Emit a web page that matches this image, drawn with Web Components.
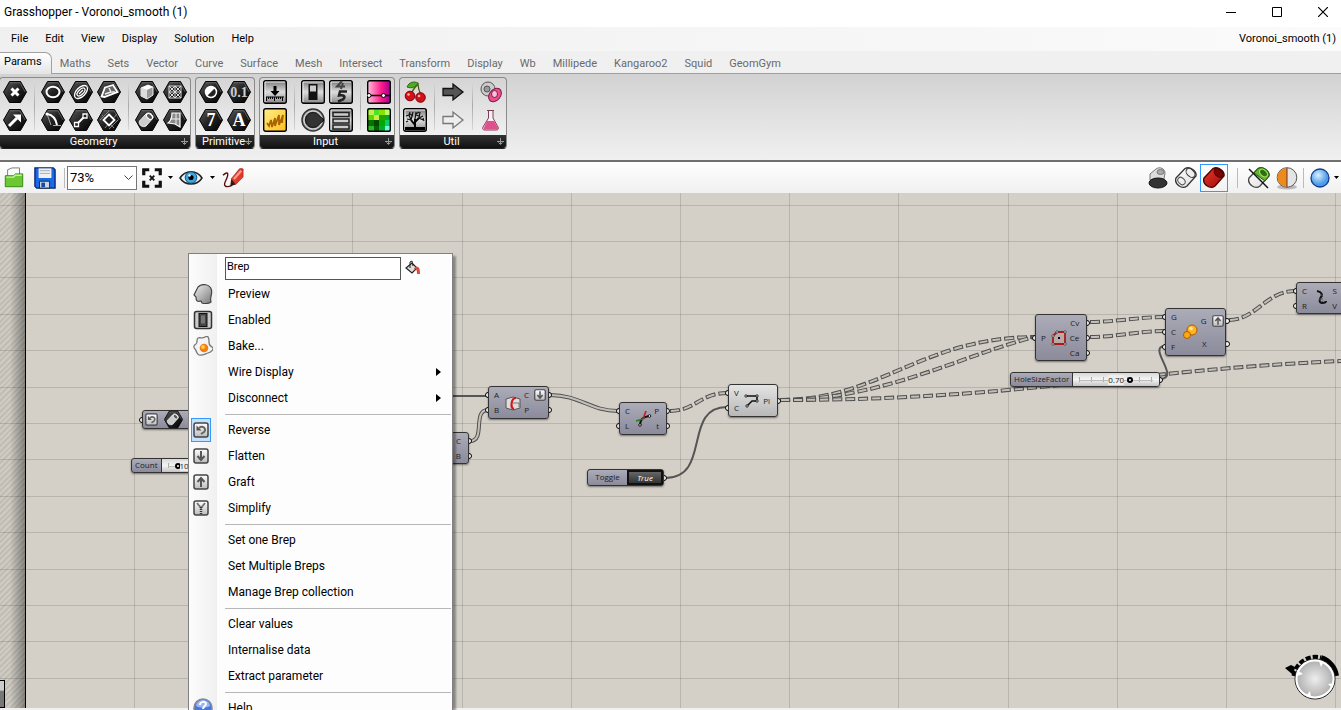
<!DOCTYPE html>
<html lang="en">
<head>
<meta charset="utf-8">
<title>Grasshopper - Voronoi_smooth (1)</title>
<style>
    html, body { height: 100%; }
    body { margin: 0; overflow: hidden; background: #fff; color: #000; font: 12px/16px Roboto, "Noto Sans", sans-serif; }
</style>
</head>
<body>
<gh-app></gh-app>
<script>
// ---------- icons ----------
const HEX = '<defs><linearGradient id="h" x2="1" y2="1"><stop stop-color="#5a5a5a"/><stop offset=".5" stop-color="#222"/><stop offset="1" stop-color="#000"/></linearGradient></defs><path d="M6.5 1.5h11l6 10.5-6 10.5h-11L.5 12z" fill="url(#h)" stroke="#000"/><path d="M7 2.8h10l5.200 9.200" fill="none" stroke="#777" stroke-width=".7"/>';
const TILE = '<defs><linearGradient id="t" y2="1" x2="0"><stop stop-color="#777"/><stop offset=".5" stop-color="#ddd"/><stop offset="1" stop-color="#888"/></linearGradient></defs><rect x=".7" y=".7" width="22.600" height="22.600" rx="2" fill="url(#t)" stroke="#000" stroke-width="1.400"/><path d="M2 22V2h20" fill="none" stroke="#eee"/>';
const SMALL = '<defs><linearGradient id="s" y2="1" x2="0"><stop stop-color="#fff"/><stop offset="1" stop-color="#bbb"/></linearGradient></defs><rect x="1" y="1" width="14" height="14" rx="2" fill="url(#s)" stroke="#444" stroke-width="1.500"/>';
const CYL = (a, b, c, line) => `<defs><linearGradient id="c" x1="0" y1="0" x2="1" y2="1"><stop stop-color="${a}"/><stop offset="1" stop-color="${b}"/></linearGradient></defs><path d="M2 12 11 2.500C16 0 23 5 22 10L13 20C8 24 0 18 2 12z" fill="url(#c)" stroke="${line}" stroke-width="1.300"/><ellipse cx="16.500" cy="7" rx="3.500" ry="5.200" transform="rotate(-45 16.500 7)" fill="${c}" stroke="${line}"/>`;

const ICONS = {
    // geometry
    point: [24, HEX + '<path d="m8.500 8.500 7 7m0-7-7 7" stroke="#fff" stroke-width="3"/>'],
    vector: [24, HEX + '<path d="m6 18 8-8" stroke="#fff" stroke-width="3"/><path d="M10 6.500h8v8z" fill="#fff"/>'],
    circle: [24, HEX + '<ellipse cx="12" cy="12" rx="6.500" ry="5.300" fill="none" stroke="#fff" stroke-width="2"/>'],
    arc: [24, HEX + '<path d="M6 6c6 1 9 5 10 11" fill="none" stroke="#fff" stroke-width="2"/><path d="M6 6l4 11m2 .5h8" stroke="#aaa" fill="none"/><circle cx="6" cy="6" r="1.500" fill="#fff"/>'],
    curve: [24, HEX + '<g fill="none" stroke="#fff" stroke-width="1.300"><ellipse cx="12" cy="12" rx="8" ry="4.500" transform="rotate(-45 12 12)"/><ellipse cx="12" cy="12" rx="5" ry="2.500" transform="rotate(-45 12 12)"/><path d="m10 14 4-4"/></g>'],
    line: [24, HEX + '<path d="m7 17 9-9" stroke="#fff" stroke-width="2"/><path d="M5.500 14.500h4v4h-4zM14 6h4v4h-4z" fill="#222" stroke="#fff" stroke-width="1.300"/>'],
    plane: [24, HEX + '<path d="m8 7.500 8-2.500 4.500 7-13 5-3-.5z" fill="#666" stroke="#fff" stroke-width="1.800"/><path d="m8 14 6-2-2-4m3 4 3 0" fill="none" stroke="#eee" stroke-width="1.500"/>'],
    rect: [24, HEX + '<path d="m3 12 9-9m9 9-9 9M5 7l12 13M8 20 20 6" stroke="#888"/><path d="m12 6.500 5.500 5.500-5.500 5.500L6.500 12z" fill="#222" stroke="#fff" stroke-width="1.800"/>'],
    box: [24, HEX + '<path d="m6 8 7-3 5 2v8l-6 4-6-3z" fill="#999" stroke="#eee"/><path d="m6 8 6 2v9l-6-3z" fill="#ddd"/><path d="m6 8 7-3 5 2-6 3z" fill="#fff"/>'],
    brep: [24, HEX + '<path d="M4.500 13 11 6c3-3 8 1 7 4l-7 8c-3 2-8-1-6.500-5z" fill="#ccc" stroke="#eee"/><ellipse cx="14.500" cy="8.500" rx="2.200" ry="3.500" transform="rotate(-45 14.500 8.500)" fill="#555" stroke="#fff"/>'],
    mesh: [24, HEX + '<path d="M6 6h12v12H6zM6 12h12M12 6v12M6 6l12 12m0-12L6 18M12 6l6 6-6 6-6-6z" fill="none" stroke="#ddd"/>'],
    surface: [24, HEX + '<path d="M9 5h8v14l-5-3-7-1c3-2 4-6 4-10z" fill="#888" stroke="#fff" stroke-width="1.200"/><path d="M13 5v11M7 11h10" stroke="#eee"/>'],
    // primitive
    bool: [24, HEX + '<circle cx="12" cy="12" r="5.500" fill="#fff"/><path d="M8 16 16 8a5.500 5.500 0 0 1-8 8z" fill="#222"/><circle cx="12" cy="12" r="5.500" fill="none" stroke="#fff" stroke-width="1.500"/>'],
    int: [24, HEX + '<text x="12" y="18" text-anchor="middle" font-family="Liberation Serif" font-weight="bold" font-size="18" fill="#fff">7</text>'],
    number: [24, HEX + '<text x="12" y="17" text-anchor="middle" font-family="Liberation Serif" font-weight="bold" font-size="14" fill="#ccc">0.1</text>'],
    text: [24, HEX + '<text x="12" y="18" text-anchor="middle" font-family="Liberation Serif" font-weight="bold" font-size="18" fill="#fff">A</text>'],
    // input
    slider: [24, TILE + '<path d="M12 6v7" stroke="#000" stroke-width="3"/><path d="M7.500 11h9L12 16z"/><path d="M3.500 21v-4m2 2v-2m2 2v-2m2 2v-2m2 4v-4m2 2v-2m2 2v-2m2 2v-2m2 4v-4M3 17h18" stroke="#000"/>'],
    panel: [24, '<defs><linearGradient id="y" x2="1" y2="1"><stop stop-color="#fff08a"/><stop offset="1" stop-color="#ffbe1a"/></linearGradient></defs><rect x=".7" y=".7" width="22.600" height="22.600" rx="2" fill="url(#y)" stroke="#000" stroke-width="1.400"/><path d="m4 15 2 3 2-6 1 7 3-9 0 8 4-11v10l4-10-1 8" fill="none" stroke="#a86400" stroke-width="1.800"/>'],
    toggle: [24, TILE + '<path d="M7.500 4h9v16h-9z" fill="#111"/><path d="M9 5.500h6v6H9z" fill="#ccc"/>'],
    knob: [24, '<circle cx="12" cy="12" r="11" fill="#aaa" stroke="#333" stroke-width="1.500"/><circle cx="12" cy="12" r="9" fill="#777" stroke="#ddd"/><path d="M18 7.500 23 12l-5 4.500a7.500 7.500 0 1 1 0-9z" fill="#333" stroke="#111"/>'],
    scroller: [24, TILE + '<path d="M13 1 8 6.500h8M14 3l-2 6" fill="none" stroke="#444" stroke-width="2"/><path d="M18 11.500h-7l-1 4c5-1 7 1 4 4l-5 2" fill="none" stroke="#222" stroke-width="2.500"/>'],
    list: [24, TILE + '<g fill="#ccc" stroke="#222" stroke-width="1.500"><path d="M4 4.500h16v4H4zM4 11h16v4H4zM4 17h16v4H4z"/></g>'],
    gradient: [24, '<defs><linearGradient id="p" x2="1" y2="0"><stop stop-color="#ffc0dc"/><stop offset=".6" stop-color="#ff1a8c"/><stop offset="1" stop-color="#a00090"/></linearGradient></defs><rect x=".7" y=".7" width="22.600" height="22.600" rx="2" fill="url(#p)" stroke="#000" stroke-width="1.400"/><path d="M0 15.500h24" stroke="#000" stroke-width="1.300"/><circle cx="2" cy="15.500" r="2" fill="#fff" stroke="#000"/><circle cx="16.500" cy="15.500" r="2" fill="#fff" stroke="#000"/>'],
    image: [24, '<rect width="24" height="24" rx="2" fill="#0a3"/><g><path d="M1 1h6v6H1z" fill="#bdf24a"/><path d="M7 1h5v6H7z" fill="#4ee02c"/><path d="M12 1h6v6h-6z" fill="#84e600"/><path d="M18 1h5v6h-5z" fill="#b8ff70"/><path d="M1 7h6v5H1z" fill="#5bd800"/><path d="M7 7h5v5H7z" fill="#c8f040"/><path d="M12 7h6v5h-6z" fill="#2ba000"/><path d="M1 12h6v6H1z" fill="#0c7000"/><path d="M7 12h5v6H7z" fill="#034a00"/><path d="M12 12h6v6h-6z" fill="#0a0"/><path d="M18 12h5v6h-5z" fill="#1c6"/><path d="M1 18h6v5H1z" fill="#28b828"/><path d="M7 18h5v5H7z" fill="#066000"/><path d="M18 18h5v5h-5z" fill="#6fd"/></g><rect x=".7" y=".7" width="22.600" height="22.600" rx="2" fill="none" stroke="#000" stroke-width="1.400"/>'],
    // util
    cherry: [24, '<path d="M8 14C10 9 12 7 15 4c0 4 1 7 3 11" fill="none" stroke="#4a5a10" stroke-width="1.300"/><path d="M4 7c2-5 7-6 11-4-2 4-6 6-11 4z" fill="#4fae1e" stroke="#2d6a10"/><circle cx="7" cy="16" r="4.800" fill="#d4101a" stroke="#7c0008"/><circle cx="17.500" cy="17.500" r="4.800" fill="#d4101a" stroke="#7c0008"/><circle cx="5.500" cy="14.500" r="1.300" fill="#ffb0a8"/><circle cx="16" cy="16" r="1.300" fill="#ffb0a8"/>'],
    tree: [24, TILE + '<path d="M12 21V11m0 6-4-5m4 2 4-4" stroke="#000" stroke-width="2" fill="none"/><path d="M8 12 4 11m4 1L6 7m2 5 2-8m2 7 1-7m3 6 1-6m-1 6 4-2m-4 2 4 2M5 13l-2 1m17-4 1 3M6 7 3 8m3-1 1-3m6 2 3-2m-6 4L7 6m9 2-3-1" stroke="#111" stroke-width="1.200" fill="none"/><path d="M2 19h20v3H2z"/>'],
    arrowDark: [24, '<path d="M2 8.500h10V4l10 8-10 8v-4.500H2z" fill="#555" stroke="#111" stroke-width="1.300"/>'],
    arrowLight: [24, '<path d="M2 8.500h10V4l10 8-10 8v-4.500H2z" fill="#eee" stroke="#777" stroke-width="1.300"/>'],
    cluster: [24, '<circle cx="9" cy="9" r="7" fill="#ccc" stroke="#555"/><circle cx="8" cy="9" r="3" fill="#999" stroke="#555"/><ellipse cx="16" cy="15" rx="5.500" ry="7.500" transform="rotate(40 16 15)" fill="#e8508c" stroke="#801848"/><ellipse cx="15.500" cy="14" rx="3" ry="3.500" fill="#ffc0dc" stroke="#801848"/>'],
    flask: [24, '<path d="M8 2.500h7M9.500 3v7L4 19c-1 2 0 3 2 3h11c2 0 3-1 2-3l-5-9V3" fill="#fbeef4" stroke="#7a4058"/><path d="M8 13h7l4 7c0 1-1 1.500-2 1.500H6c-1 0-2-.5-1-2z" fill="#e0508c"/>'],
    // toolbar
    open: [24, '<path d="M5 10V3l5-2h8v9" fill="#fafafa" stroke="#777"/><path d="M2.500 9.500h9l2-2h8v14h-19z" fill="#6cc832" stroke="#2e8410"/><path d="M3.500 11h8l2-2h7" fill="none" stroke="#c8f09a" stroke-width="1.500"/>'],
    save: [24, '<path d="M1 1h20l2 2v20H3l-2-2z" fill="#1a6ae8" stroke="#06206a" stroke-width="1.400"/><path d="M5 1.500h14V12H5z" fill="#f0f0f0"/><path d="M6.500 4h11m-11 3h11" stroke="#aaa"/><path d="M6 15.500h11V23H6z" fill="#ccd4e0" stroke="#123"/><path d="M8 17h4v5H8z" fill="#1848a0"/>'],
    zoomExt: [24, '<path d="M3 9V3h6M15 3h6v6M21 15v6h-6M9 21H3v-6" fill="none" stroke="#111" stroke-width="3.500"/><path d="m9.500 9.500 5 5m0-5-5 5" stroke="#111" stroke-width="2"/>'],
    eye: [24, '<path d="M1 12C6 3.500 18 3.500 23 12c-5 8-17 8-22 0z" fill="#e8f6ff" stroke="#222" stroke-width="1.500"/><circle cx="12" cy="11.500" r="5.800" fill="#3ca8e0" stroke="#124a78"/><circle cx="12" cy="11.500" r="2.600"/><circle cx="10.500" cy="9.500" r="1.200" fill="#fff"/>'],
    pencil: [24, '<path d="M1 9c7-6 6 0 3 6s0 8 7 5" fill="none" stroke="#5a1010" stroke-width="1.500"/><path d="m10 13 9-11c3-1 5 0 4 2v7l-8 8z" fill="#e03a2a" stroke="#a02018" stroke-width=".7"/><path d="m10 13 5 6-6 2z" fill="#3a1410"/><path d="m13 13 8-9" stroke="#ff9a8a" stroke-width="2.500"/>'],
    shadeOff: [24, '<path d="M4 14V8l6-5c4-3 9 0 9 4l-1 6z" fill="#ddd" stroke="#777"/><ellipse cx="14.500" cy="6" rx="3.500" ry="2.500" fill="#aaa" stroke="#777"/><ellipse cx="12" cy="17" rx="9" ry="5" fill="#333" stroke="#111"/>'],
    shadeWire: [24, CYL('#fff', '#ddd', '#eee', '#333') + '<ellipse cx="7.500" cy="15" rx="3" ry="4.200" transform="rotate(-45 7.500 15)" fill="none" stroke="#555"/>'],
    shadeFull: [24, CYL('#e83a2c', '#a00808', '#7a0404', '#4a0000')],
    shadeSel: [24, CYL('#fff', '#ddd', '#eee', '#444') + '<path d="M7 7l4-4.500C16 0 23 5 22 10l-4 5z" fill="#64b428" stroke="#245c0c"/><ellipse cx="16.500" cy="7" rx="3" ry="4.500" transform="rotate(-45 16.500 7)" fill="#2e7010" stroke="#a8e070"/><path d="m2 3 19 19" stroke="#111" stroke-width="1.500"/>'],
    ballHalf: [24, '<ellipse cx="12" cy="21" rx="10" ry="2.500" fill="#bbb"/><circle cx="12" cy="11.500" r="9.800" fill="#e4e4e4" stroke="#555"/><path d="M12 2a9.500 9.500 0 0 0 0 19z" fill="#ec8a1c"/><path d="M12 2v19" stroke="#633"/>'],
    ball: [24, '<defs><radialGradient id="b" cx=".4" cy=".35"><stop stop-color="#d8f2ff"/><stop offset="1" stop-color="#4e9ce8"/></radialGradient></defs><circle cx="12" cy="12" r="9" fill="url(#b)" stroke="#153a90" stroke-width="1.300"/>'],
    // menu
    head: [20, '<defs><linearGradient id="g" x2="1" y2="1"><stop stop-color="#f2f2f2"/><stop offset="1" stop-color="#777"/></linearGradient></defs><path d="M5 3c4-4 12-3 13.500 3 1 5-2 7-.5 12-3 2-6 2-9 1l-1-2c-4 1-5 0-5-4L1 11z" fill="url(#g)" stroke="#444" stroke-width="1.200"/>'],
    enabled: [20, '<rect x="1.500" y="1.500" width="17" height="17" rx="2" fill="#ccc" stroke="#333" stroke-width="1.500"/><rect x="6" y="3.500" width="8" height="13" fill="#444" stroke="#111"/><path d="M8 5.500h4v8H8z" fill="#777"/>'],
    bake: [20, '<path d="M5 2c3-1 4 1 7-1s4 1 4 4 0 4 3 6-1 5-4 6-6 3-9 2-2-4-4-6-1-4 1-5 0-5 2-6z" fill="#f4f4f4" stroke="#777" stroke-width="1.300"/><circle cx="11" cy="12" r="4.300" fill="#f57c10"/><circle cx="10" cy="11" r="2" fill="#ffc84a"/>'],
    bucket: [16, '<path d="m1 8 6-5 5 5-5 5z" fill="#ddd" stroke="#222" stroke-width="1.200"/><path d="M5 8V2l2-1 1 5" fill="none" stroke="#222"/><path d="M10 7c4-1 5 1 5 7h-3c0-3 0-5-3-5z" fill="#e04a38"/>'],
    reverse: [16, SMALL + '<path d="M3.500 3.500v5h5z" fill="#555"/><path d="M6 6c4-3 8 1 5 4l-3 2" fill="none" stroke="#666" stroke-width="2"/>'],
    flatten: [16, SMALL + '<path d="M8 3v8M4.500 8 8 12l3.500-4" fill="none" stroke="#555" stroke-width="2"/>'],
    graft: [16, SMALL + '<path d="M8 13V5M4.500 8 8 4l3.500 4" fill="none" stroke="#555" stroke-width="2"/>'],
    simplify: [16, SMALL + '<path d="m4 3 4 5 4-5" fill="none" stroke="#777" stroke-width="2"/><path d="M8 7v7" stroke="#333" stroke-width="2.500" stroke-dasharray="1 1"/>'],
    help: [20, '<circle cx="10" cy="10" r="9" fill="#4a78d8" stroke="#889" stroke-width="1.500"/><path d="M3 8a7 6 0 0 1 14 0c-4 2-10 2-14 0z" fill="#9ab8f4"/><path d="M7 7c0-4 6-4 6-1 0 2-3 2-3 5m0 2v2" fill="none" stroke="#fff" stroke-width="2"/>'],
    // components
    contour: [18, '<path d="m2 5 7-2 7 2v9l-7 2-7-2z" fill="#ddd" stroke="#555"/><path d="M12 4c-5 0-6 10-2 11" fill="none" stroke="#d01818" stroke-width="2.200"/><path d="M9 9h6v4" stroke="#777" fill="none"/>'],
    eval: [18, '<path d="M6 16C6 9 9 7 15 6" fill="none" stroke="#111" stroke-width="2"/><path d="m9 9 3-8" stroke="#c82020" stroke-width="1.700"/><path d="m9 9-7 2" stroke="#208020" stroke-width="1.700"/><circle cx="6" cy="15" r="1.300" fill="#fff" stroke="#111"/><circle cx="15.500" cy="6" r="1.300" fill="#fff" stroke="#111"/>'],
    polyline: [18, '<path d="M3 4h11v5H9l-5 5" fill="none" stroke="#111" stroke-width="1.500"/><g fill="#fff" stroke="#111" stroke-width=".8"><path d="M2 3h2v2H2zM13 3h2v2h-2zM13 8h2v2h-2zM3 13h2v2H3z"/></g>'],
    cell: [18, '<path d="m3 7 4-4h8v12H3z" fill="#b8a8a8" stroke="#b01818" stroke-width="1.800"/><g fill="#fff" stroke="#444" stroke-width=".8"><path d="M2 6h2v2H2zM6 2h2v2H6zM14 2h2v2h-2zM14 14h2v2h-2zM2 14h2v2H2z"/></g><path d="M8 8h2v2H8z"/>'],
    scale: [18, '<circle cx="11" cy="7" r="5" fill="#ffb428" stroke="#a85c00"/><circle cx="6" cy="12" r="3.500" fill="#ffa810" stroke="#a85c00"/><circle cx="10" cy="5.500" r="1.800" fill="#ffe6a0"/>'],
    spring: [18, '<path d="M5 2c5 1 6 4 4 6s-2 6 1 6 4-1 4-2" fill="none" stroke="#111" stroke-width="2"/><path d="m8 5 3 2m-4 3h4m-2 3 2-1" stroke="#555"/>'],
};

class GhIcon extends HTMLElement {
    constructor(){
        super();
        this.attachShadow({ mode: 'open' });
    }
    connectedCallback(){
        const [box, art] = ICONS[this.getAttribute('name')];
        const size = this.getAttribute('size') ?? box;
        this.shadowRoot.innerHTML = `
        <style>
            :host { display: block; flex: none; width: ${size}px; height: ${size}px; }
            svg { display: block; width: 100%; height: 100%; }
        </style>
        <svg viewBox="0 0 ${box} ${box}" aria-hidden="true">${art}</svg>`;
    }
}
customElements.define('gh-icon', GhIcon);

// ---------- window bars ----------
class GhTitlebar extends HTMLElement {
    constructor(){
        super();
        this.attachShadow({ mode: 'open' }).innerHTML = `
        <style>
            :host { display: flex; justify-content: space-between; height: 27px; background: #fff; }
            span { padding: 4px; }
            div { display: flex; gap: 10px; }
            button { width: 36px; height: 24px; padding: 0; border: 0; background: none; }
            svg { display: block; margin: auto; }
        </style>
        <span><slot></slot></span>
        <div>
            <button aria-label="Minimize"><svg width="10" height="10"><path d="M0 5.500h10" stroke="#000"/></svg></button>
            <button aria-label="Maximize"><svg width="10" height="10"><path d="M.5.5h9v9h-9z" fill="none" stroke="#000"/></svg></button>
            <button aria-label="Close"><svg width="10" height="10"><path d="m0 0 10 10M10 0 0 10" stroke="#000" stroke-width="1.200"/></svg></button>
        </div>`;
    }
}
customElements.define('gh-titlebar', GhTitlebar);

class GhMenubar extends HTMLElement {
    constructor(){
        super();
        this.attachShadow({ mode: 'open' });
    }
    connectedCallback(){
        const items = this.getAttribute('items').split(',');
        this.shadowRoot.innerHTML = `
        <style>
            :host { display: flex; align-items: center; justify-content: space-between; height: 24px; padding: 0 5px 0 11px;
                background: linear-gradient(90deg, #f0f0f0, #f8f8f8 80%, #fbfbfb); font-size: 11px; }
            nav { display: flex; gap: 17px; }
            button { padding: 0; border: 0; background: none; font: inherit; color: inherit; }
        </style>
        <nav>${items.map(i => `<button>${i}</button>`).join('')}</nav>
        <slot></slot>`;
    }
}
customElements.define('gh-menubar', GhMenubar);

class GhTabs extends HTMLElement {
    constructor(){
        super();
        this.attachShadow({ mode: 'open' });
    }
    connectedCallback(){
        const tabs = this.getAttribute('items').split(',');
        this.shadowRoot.innerHTML = `
        <style>
            :host { display: flex; align-items: end; gap: 17px; height: 23px; box-sizing: border-box; background: #f0f0f0; border-bottom: 1px solid #a0a0a0; }
            button { height: 18px; padding: 0; border: 0; background: none; font: 11px/16px Roboto, sans-serif; color: #6a6a6a; }
            .on { box-sizing: border-box; height: 22px; margin: 0 -9px -1px -1px; padding: 0 9px 4px 4px; border: 1px solid #a0a0a0; border-bottom: 0;
                border-radius: 0 7px 0 0; background: linear-gradient(#fff, #e4e4e4); color: #000; }
        </style>
        ${tabs.map((t, i) => `<button role="tab"${i ? '' : ' class="on" aria-selected="true"'}>${t}</button>`).join('')}`;
    }
}
customElements.define('gh-tabs', GhTabs);

// groups are separated by "|", each group lists its icons row by row
class GhPanel extends HTMLElement {
    constructor(){
        super();
        this.attachShadow({ mode: 'open' });
    }
    connectedCallback(){
        const groups = this.getAttribute('icons').split('|').map(g => g.split(' '));
        this.shadowRoot.innerHTML = `
        <style>
            :host { display: block; border: 1px solid #8a8a8a; border-bottom-color: #222; border-radius: 4px; overflow: hidden; background: linear-gradient(#d4d4d4, #f0f0f0 55px); }
            .groups { display: flex; padding: 0 1px 1px; }
            .group { display: grid; grid-template-rows: 28px 28px; }
            button { display: grid; place-items: center; width: 28px; height: 28px; padding: 0; border: 0; background: none; }
            hr { width: 1px; margin: 4px 4px 4px 5px; border: 0; background: linear-gradient(#d8d8d8, #aaa, #d8d8d8); }
            footer { display: flex; align-items: center; height: 13px; padding: 0 2px 0 6px; background: linear-gradient(#333, #111); color: #fff; font: 11px/13px Roboto, sans-serif; }
            span { flex: 1; text-align: center; }
        </style>
        <div class="groups">
            ${groups.map(g => `<div class="group" style="grid-template-columns: repeat(${g.length / 2}, 28px)">
                ${g.map(n => `<button aria-label="${n}"><gh-icon name="${n}"></gh-icon></button>`).join('')}
            </div>`).join('<hr>')}
        </div>
        <footer><span><slot></slot></span><svg width="7" height="7"><path d="M3.500 0v6M0 3.500h7M1.500 4.500l2 2 2-2" fill="none" stroke="#999"/></svg></footer>`;
    }
}
customElements.define('gh-panel', GhPanel);

class GhRibbon extends HTMLElement {
    constructor(){
        super();
        this.attachShadow({ mode: 'open' }).innerHTML = `
        <style>
            :host { display: flex; align-items: start; gap: 4px; height: 88px; box-sizing: border-box; padding-top: 3px;
                background: linear-gradient(#d2d2d2, #f0f0f0 85px); border-bottom: 2px solid #707070; }
            ::slotted(:first-child) { margin-left: -1px; }
        </style>
        <slot></slot>`;
    }
}
customElements.define('gh-ribbon', GhRibbon);

class GhToolbar extends HTMLElement {
    constructor(){
        super();
        this.attachShadow({ mode: 'open' }).innerHTML = `
        <style>
            :host { display: flex; align-items: center; justify-content: space-between; height: 31px; background: linear-gradient(#fff, #f0f0f0); }
            div { display: flex; align-items: center; }
            button { display: grid; place-items: center; width: 28px; height: 28px; padding: 0; border: 1px solid transparent; background: none; }
            .on { border-color: #3399ff; }
            .wide { width: 34px; }
            .drop { width: 8px; }
            hr { width: 1px; height: 20px; margin: 0 7px 0 9px; border: 0; background: #bbb; }
            .near { margin: 0 2px; }
            .select { display: grid; align-items: center; margin-right: 1px; }
            .select > * { grid-area: 1 / 1; }
            select { appearance: none; width: 70px; height: 24px; padding: 0 2px; border: 1px solid #777; border-radius: 0; background: #fff; font: 13px/16px Roboto, sans-serif; color: #000; }
            .select svg { justify-self: end; margin-right: 4px; pointer-events: none; }
        </style>
        <div>
            <button aria-label="Open"><gh-icon name="open" size="22"></gh-icon></button>
            <button class="wide" aria-label="Save"><gh-icon name="save" size="22"></gh-icon></button>
            <hr class="near">
            <label class="select"><select aria-label="Zoom"><option>73%</option></select>
                <svg width="9" height="6"><path d="m.5.5 4 4 4-4" fill="none" stroke="#444"/></svg></label>
            <button aria-label="Zoom extents"><gh-icon name="zoomExt" size="22"></gh-icon></button>
            <button class="drop" aria-label="Views"><svg width="5" height="3"><path d="M0 0h5L2.500 3z"/></svg></button>
            <button class="wide" aria-label="Preview"><gh-icon name="eye"></gh-icon></button>
            <button class="drop" aria-label="Preview options"><svg width="5" height="3"><path d="M0 0h5L2.500 3z"/></svg></button>
            <button class="wide" aria-label="Sketch"><gh-icon name="pencil" size="22"></gh-icon></button>
        </div>
        <div>
            <button aria-label="No preview"><gh-icon name="shadeOff"></gh-icon></button>
            <button aria-label="Wireframe preview"><gh-icon name="shadeWire"></gh-icon></button>
            <button class="on" aria-label="Shaded preview"><gh-icon name="shadeFull"></gh-icon></button>
            <hr>
            <button aria-label="Selected only"><gh-icon name="shadeSel"></gh-icon></button>
            <button aria-label="Preview settings"><gh-icon name="ballHalf"></gh-icon></button>
            <hr class="near">
            <button aria-label="Mesh quality"><gh-icon name="ball"></gh-icon></button>
            <svg width="7" height="4"><path d="M0 0h5L2.500 3z"/></svg>
        </div>`;
    }
}
customElements.define('gh-toolbar', GhToolbar);

// ---------- canvas ----------
const NODE_STYLE = `
    :host { display: block; position: absolute; isolation: isolate; font: 8px/10px "Open Sans", "Noto Sans", sans-serif; color: #222; }
    .body { box-sizing: border-box; display: flex; height: 100%; border: 1px solid #333; border-radius: 3px;
        background: linear-gradient(var(--top, #acabb8), var(--bottom, #8c8b9b)); box-shadow: 0 1px 2px rgba(0,0,0,.45); }
    .grip { position: relative; }
    .grip::before { content: ''; position: absolute; z-index: -1; top: 50%; width: 4px; height: 4px; margin-top: -3px; border: 1px solid #000; border-radius: 50%; background: #fff; }
    .in::before { left: -4px; }
    .out::before { right: -4px; }`;

class GhNode extends HTMLElement {
    constructor(){
        super();
        this.attachShadow({ mode: 'open' });
    }
    connectedCallback(){
        const list = name => (this.getAttribute(name) ?? '').split(' ').filter(Boolean);
        const mark = this.getAttribute('mark');
        const port = (side, label, tag = '') => `<li class="grip ${side}">${label === '-' ? '' : label}${tag}</li>`;
        const tag = mark ? `<gh-icon name="${mark}" size="12"></gh-icon>` : '';
        this.shadowRoot.innerHTML = `
        <style>
            ${NODE_STYLE}
            .body { justify-content: space-between; align-items: center; }
            ul { align-self: stretch; display: flex; flex-direction: column; margin: 0; padding: 0; list-style: none; }
            li { flex: 1; display: flex; align-items: center; padding: 0 4px 0 5px; }
            li:empty { padding: 0 1px; }
            .out { justify-content: end; gap: 5px; padding: 0 7px 0 2px; }
            .marked .out { padding-right: 19px; }
            .marked .out:first-child { padding-right: 2px; }
        </style>
        <div class="body ${mark ? 'marked' : ''}">
            <ul>${list('in').map(l => port('in', l)).join('')}</ul>
            <slot></slot>
            <ul>${list('out').map((l, i) => port('out', l, i ? '' : tag)).join('')}</ul>
        </div>`;
    }
}
customElements.define('gh-node', GhNode);

class GhSlider extends HTMLElement {
    constructor(){
        super();
        this.attachShadow({ mode: 'open' });
    }
    connectedCallback(){
        const value = this.getAttribute('value');
        this.shadowRoot.innerHTML = `
        <style>
            ${NODE_STYLE}
            label { padding: 1px 3px 0; border-right: 1px solid #333; }
            .track { flex: 1; display: grid; align-items: center; padding: 0 6px; border-radius: 0 2px 2px 0; background: linear-gradient(#d8d8d8, #f4f4f4 50%, #c4c4c4); }
            .track > * { grid-area: 1 / 1; }
            input { appearance: none; width: 100%; height: 5px; margin: 0;
                background: linear-gradient(#bbb, #bbb) 0 3px / 100% 1px no-repeat, repeating-linear-gradient(90deg, #aaa 0 1px, transparent 1px 12px); }
            input::-webkit-slider-thumb { appearance: none; width: 6px; height: 6px; box-sizing: border-box; border: 2px solid #000; border-radius: 50%; background: #fff; }
            output { z-index: 1; width: max-content; margin-left: var(--value-left); background: #eee; }
        </style>
        <div class="body grip out">
            <label for="range"><slot></slot></label>
            <div class="track">
                <input id="range" type="range" min="0" max="${this.getAttribute('max')}" step="any" value="${value}">
                <output>${value}</output>
            </div>
        </div>`;
    }
}
customElements.define('gh-slider', GhSlider);

class GhToggle extends HTMLElement {
    constructor(){
        super();
        this.attachShadow({ mode: 'open' }).innerHTML = `
        <style>
            ${NODE_STYLE}
            span { flex: 1; padding-top: 2px; text-align: center; }
            button { width: 36px; padding: 0; border: 2px solid #111; background: linear-gradient(#666, #333); font: inherit; font-style: italic; color: #fff; }
        </style>
        <div class="body grip out"><span><slot></slot></span><button>True</button></div>`;
    }
}
customElements.define('gh-toggle', GhToggle);

const WIRES = [
    // [kind, path]
    ['solid', 'M440 203H488'],
    ['double', 'M470 248C486 248 472 217 488 217'],
    ['double', 'M550 202C580 202 590 218 618 218'],
    ['dashed', 'M670 218C695 218 700 200 727 200'],
    ['solid', 'M665 285C712 285 682 214 727 214'],
    ['dashed', 'M780 207C880 207 920 145 1034 144'],
    ['dashed', 'M780 207C880 207 955 165 1034 144'],
    ['dashed', 'M780 207C1020 207 1120 178 1341 168'],
    ['dashed', 'M1090 129C1115 129 1140 124 1164 124'],
    ['dashed', 'M1090 144C1115 144 1140 138 1164 138'],
    ['dashed', 'M1229 127C1256 127 1266 98 1295 98'],
    ['solid', 'M1161 186C1180 184 1148 155 1164 153'],
];

class GhCanvas extends HTMLElement {
    constructor(){
        super();
        this.attachShadow({ mode: 'open' });
    }
    connectedCallback(){
        let grid = '';
        for (let i = 0; i < 40; i++) {
            const x = Math.round(24.800 + 109.200 * i), y = Math.round(11.500 + 36.400 * i);
            if (i) grid += `M${x}.5 0V2000`;
            grid += `M0 ${y}.5H4000`;
        }
        const wires = WIRES.map(([kind, d]) => `<path class="${kind}" d="${d}"/>${kind === 'solid' ? '' : `<path class="${kind} core" d="${d}"/>`}`).join('');
        this.shadowRoot.innerHTML = `
        <style>
            :host { display: block; position: relative; overflow: hidden; background: #d4d0c8; }
            .edge { position: absolute; inset: 0 auto 0 0; box-sizing: border-box; width: 26px; border-right: 1px solid #000;
                background: linear-gradient(90deg, rgba(0,0,0,0) 40%, rgba(0,0,0,.35)), repeating-linear-gradient(135deg, #cfcbc3 0 2px, #c0bdb5 2px 4px); }
            .corner { position: absolute; left: -1px; bottom: 0; width: 4px; height: 26px; border: 1px solid #000; background: linear-gradient(#ccc 35%, #777 40%); }
            svg.sheet { position: absolute; width: 100%; height: 100%; }
            .sheet path { fill: none; }
            .grid { stroke: #000; stroke-opacity: .13; }
            .solid { stroke: #555; stroke-width: 2; }
            .double { stroke: #505050; stroke-width: 4; }
            .double.core { stroke: #c4c0b8; stroke-width: 2; }
            .dashed { stroke: #505050; stroke-width: 4; stroke-dasharray: 10 3; }
            .dashed.core { stroke: #c4c0b8; stroke-width: 2; stroke-dasharray: 8 5; stroke-dashoffset: -1; }
            .compass { position: absolute; right: 0; bottom: 0; }
        </style>
        <div class="edge"></div>
        <svg class="sheet"><path class="grid" d="${grid}"/>${wires}</svg>
        <div class="corner"></div>
        <slot></slot>
        <svg class="compass" width="60" height="60" viewBox="0 0 60 60">
            <defs><radialGradient id="dial"><stop stop-color="#eee"/><stop offset="1" stop-color="#aaa"/></radialGradient></defs>
            <path d="M13 28A22 22 0 0 1 40 10" fill="none" stroke="#000" stroke-width="5" stroke-dasharray="5 2"/>
            <path d="M40 10a22 22 0 0 1 15 18" fill="none" stroke="#000" stroke-width="6"/>
            <path d="m4 20 6-3 4 2-1 5-2 2z"/>
            <circle cx="34" cy="31" r="20" fill="url(#dial)" stroke="#222"/>
            <circle cx="34" cy="31" r="18.500" fill="none" stroke="#fff" stroke-width="2"/>
            <path d="m38 13 4 2-2 4zM16 22l6 4-6 2zM53 35l-6 1 4 4zM25 48l4-5 1 6z" fill="#fff"/>
        </svg>`;
    }
}
customElements.define('gh-canvas', GhCanvas);

// ---------- context menu ----------
class GhMenuItem extends HTMLElement {
    constructor(){
        super();
        this.attachShadow({ mode: 'open' });
    }
    connectedCallback(){
        const icon = this.getAttribute('icon');
        this.shadowRoot.innerHTML = `
        <style>
            :host { display: block; }
            button { display: grid; grid-template-columns: 24px 1fr 16px; column-gap: 13px; align-items: center; width: 100%; height: 26px; padding: 0 0 0 2px; border: 0; background: none; font: inherit; color: inherit; text-align: left; }
            .icon { display: grid; place-items: center; height: 24px; }
            :host([small]) .icon { justify-self: start; width: 20px; box-sizing: border-box; border: 1px solid transparent; }
            :host([checked]) .icon { border-color: #3399ff; background: #c4e1ff; }
        </style>
        <button role="menuitem">
            <span class="icon">${icon ? `<gh-icon name="${icon}"></gh-icon>` : ''}</span>
            <span><slot></slot></span>
            ${this.hasAttribute('more') ? '<svg width="5" height="8"><path d="M0 0v8l5-4z"/></svg>' : ''}
        </button>`;
    }
}
customElements.define('gh-menu-item', GhMenuItem);

class GhMenu extends HTMLElement {
    constructor(){
        super();
        this.attachShadow({ mode: 'open' }).innerHTML = `
        <style>
            :host { display: block; box-sizing: border-box; width: 265px; padding-top: 1px; border: 1px solid #808080; box-shadow: 3px 3px 2px rgba(0,0,0,.35);
                background: linear-gradient(90deg, #fcfcfc, #f0f0f0 28px, #fdfdfd 28px); }
            .name { display: flex; align-items: center; gap: 4px; height: 26px; padding-left: 36px; }
            input { box-sizing: border-box; width: 176px; height: 23px; padding: 0 1px 4px; border: 1px solid #555; background: #fff; font: inherit; font-size: 11px; color: #000; }
            ::slotted(hr) { height: 1px; margin: 3px 1px 2px 36px; border: 0; background: #b8b8b8; }
        </style>
        <div class="name"><input aria-label="Name" value="Brep"><gh-icon name="bucket"></gh-icon></div>
        <slot></slot>`;
    }
}
customElements.define('gh-menu', GhMenu);

// ---------- application ----------
class GhApp extends HTMLElement {
    constructor(){
        super();
        this.attachShadow({ mode: 'open' }).innerHTML = `
        <style>
            :host { display: grid; grid-template-rows: auto auto auto auto auto 1fr; position: relative; height: 100%; box-sizing: border-box; padding-bottom: 2px; overflow: hidden; background: #f0f0f0; }
            gh-menu { position: absolute; left: 188px; top: 253px; }
            gh-node[light] { --top: #e4e4e4; --bottom: #b8b8b8; }
            .pair { display: flex; align-items: center; gap: 6px; margin-right: auto; }
        </style>
        <gh-titlebar>Grasshopper - Voronoi_smooth (1)</gh-titlebar>
        <gh-menubar items="File,Edit,View,Display,Solution,Help">Voronoi_smooth (1)</gh-menubar>
        <gh-tabs items="Params,Maths,Sets,Vector,Curve,Surface,Mesh,Intersect,Transform,Display,Wb,Millipede,Kangaroo2,Squid,GeomGym"></gh-tabs>
        <gh-ribbon>
            <gh-panel icons="point vector|circle curve plane arc line rect|box mesh brep surface">Geometry</gh-panel>
            <gh-panel icons="bool number int text">Primitive</gh-panel>
            <gh-panel icons="slider panel|toggle scroller knob list|gradient image">Input</gh-panel>
            <gh-panel icons="cherry tree|arrowDark arrowLight|cluster flask">Util</gh-panel>
        </gh-ribbon>
        <gh-toolbar></gh-toolbar>
        <gh-canvas>
            <gh-node in="-" out="-" style="left: 142px; top: 217px; width: 65px; height: 19px"><span class="pair"><gh-icon name="reverse" size="13"></gh-icon><gh-icon name="brep" size="19"></gh-icon></span></gh-node>
            <gh-slider value="10" max="100" style="left: 131px; top: 265px; width: 120px; height: 15px; --value-left: 12px">Count</gh-slider>
            <gh-node out="C B" style="left: 409px; top: 239px; width: 60px; height: 32px"></gh-node>
            <gh-node in="A B" out="C P" mark="flatten" style="left: 488px; top: 193px; width: 61px; height: 33px"><gh-icon name="contour"></gh-icon></gh-node>
            <gh-node in="C L" out="P t" style="left: 619px; top: 209px; width: 48px; height: 33px"><gh-icon name="eval"></gh-icon></gh-node>
            <gh-node light in="V C" out="Pl" style="left: 728px; top: 191px; width: 50px; height: 33px"><gh-icon name="polyline"></gh-icon></gh-node>
            <gh-toggle style="left: 587px; top: 276px; width: 77px; height: 17px">Toggle</gh-toggle>
            <gh-node in="P" out="Cv Ce Ca" style="left: 1035px; top: 121px; width: 52px; height: 47px"><gh-icon name="cell"></gh-icon></gh-node>
            <gh-node in="G C F" out="G X" mark="graft" style="left: 1165px; top: 115px; width: 61px; height: 48px"><gh-icon name="scale"></gh-icon></gh-node>
            <gh-node in="C R" out="S V" style="left: 1296px; top: 89px; width: 49px; height: 32px"><gh-icon name="spring"></gh-icon></gh-node>
            <gh-slider value="0.70" max="1" style="left: 1010px; top: 179px; width: 150px; height: 15px; --value-left: 29px">HoleSizeFactor</gh-slider>
        </gh-canvas>
        <gh-menu>
            <gh-menu-item icon="head">Preview</gh-menu-item>
            <gh-menu-item icon="enabled">Enabled</gh-menu-item>
            <gh-menu-item icon="bake">Bake...</gh-menu-item>
            <gh-menu-item more>Wire Display</gh-menu-item>
            <gh-menu-item more>Disconnect</gh-menu-item>
            <hr>
            <gh-menu-item small checked icon="reverse">Reverse</gh-menu-item>
            <gh-menu-item small icon="flatten">Flatten</gh-menu-item>
            <gh-menu-item small icon="graft">Graft</gh-menu-item>
            <gh-menu-item small icon="simplify">Simplify</gh-menu-item>
            <hr>
            <gh-menu-item>Set one Brep</gh-menu-item>
            <gh-menu-item>Set Multiple Breps</gh-menu-item>
            <gh-menu-item>Manage Brep collection</gh-menu-item>
            <hr>
            <gh-menu-item>Clear values</gh-menu-item>
            <gh-menu-item>Internalise data</gh-menu-item>
            <gh-menu-item>Extract parameter</gh-menu-item>
            <hr>
            <gh-menu-item icon="help">Help</gh-menu-item>
        </gh-menu>`;
    }
}
customElements.define('gh-app', GhApp);
</script>
</body>
</html>
